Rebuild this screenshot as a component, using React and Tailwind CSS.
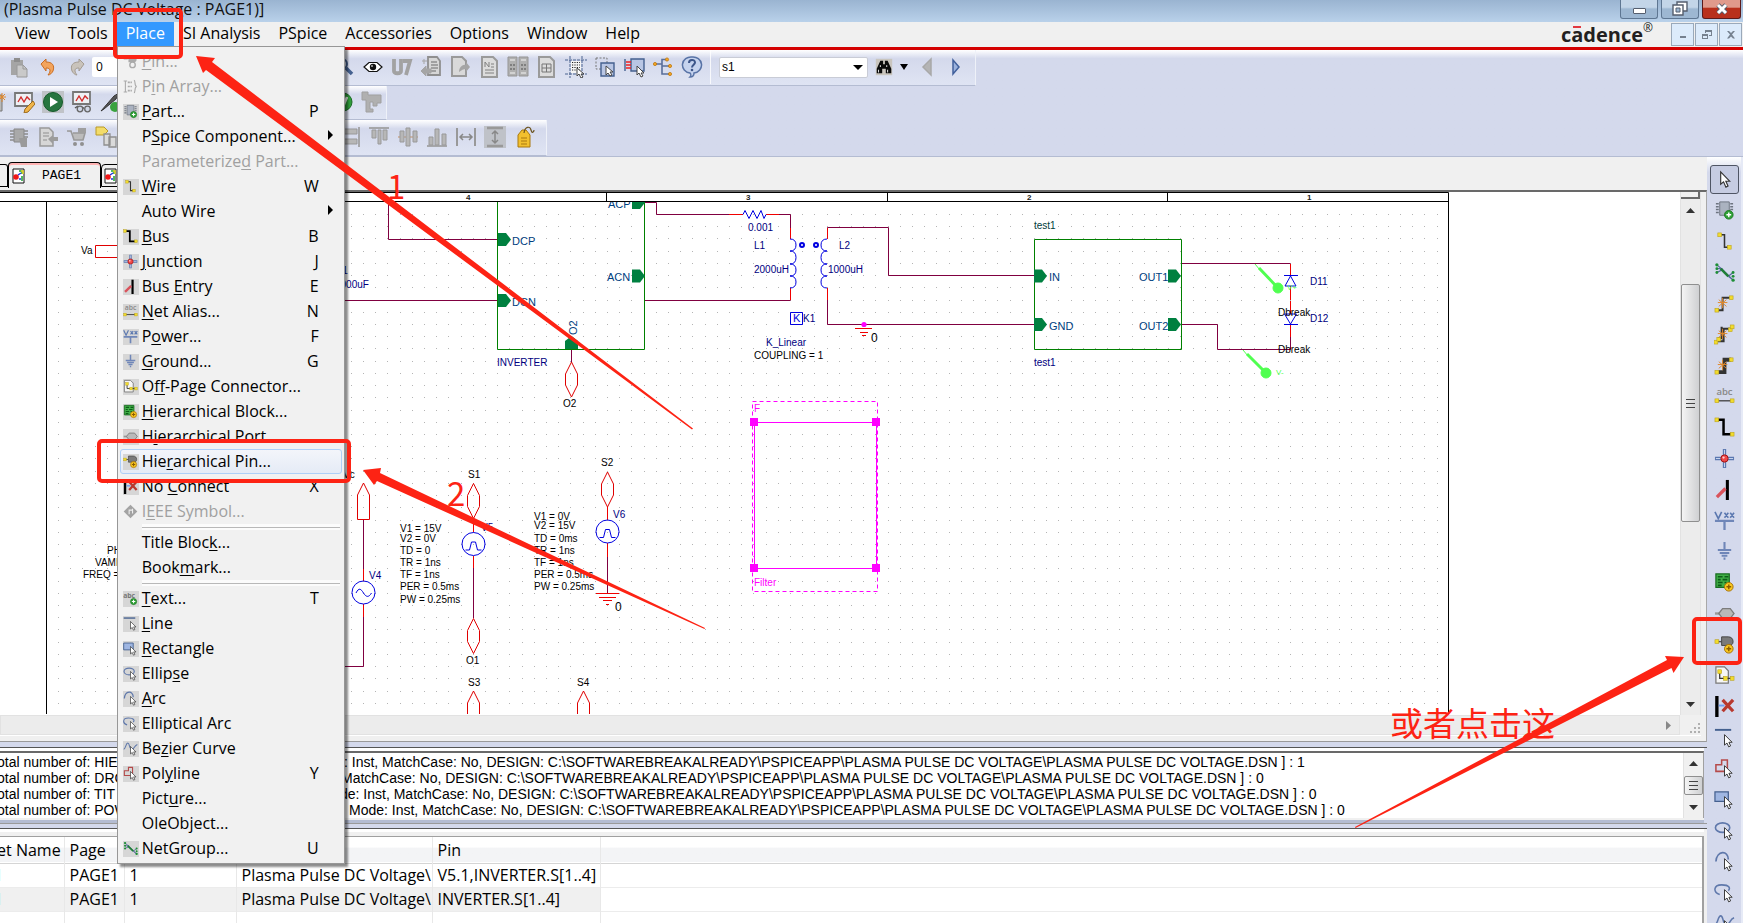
import { useState } from 'react';
import clsx from 'clsx';

const ui = "font-['Open_Sans','Noto_Sans',sans-serif]";
const arial = "font-['Liberation_Sans',Arial,sans-serif]";

const cursor = <path d="M11 8v11l2.6-2.2 1.8 4 2-1-1.8-3.8h3.4z" fill="#fff" stroke="#333" />;
const plusBadge = (fill, line) => (
    <>
        <circle cx="15.5" cy="15.5" r="4.5" fill={fill} stroke={line} />
        <path d="M13 15.5h5M15.5 13v5" stroke={fill === '#f8c820' ? '#8a5a00' : '#fff'} strokeWidth="1.5" />
    </>
);
const node = (x, y, s = 4) => <rect x={x} y={y} width={s} height={s} fill="#f2dc2c" stroke="#b8a020" strokeWidth=".6" />;

const icons = {
    paste: <><path d="M3 4h12v15H3z" fill="#a5a5a5" /><path d="M6 2h6v4H6z" fill="#8e8e8e" /><path d="M9 9h6l4 4v8H9z" fill="#c9c9c9" stroke="#999" /><path d="M15 9v4h4" fill="none" stroke="#999" /></>,
    undo: <path d="M4 8l5-5v3c6 0 9 3 7 9-1 2-3 4-5 4 3-4 3-7-2-7v3z" fill="#f3a45c" stroke="#c86d24" />,
    redo: <path d="M18 8l-5-5v3c-6 0-9 3-7 9 1 2 3 4 5 4-3-4-3-7 2-7v3z" fill="#c9c3bb" stroke="#a49c92" />,
    lens: <><circle cx="9" cy="8" r="5" fill="#dfe9f7" stroke="#44608f" strokeWidth="2" /><path d="M13 12l6 6" stroke="#44608f" strokeWidth="3.5" /></>,
    eye: <><path d="M2 11l5-4.500h8l5 4.500-5 4.500H7z" fill="#fff" stroke="#111" strokeWidth="1.2" /><circle cx="11" cy="11" r="3.2" fill="#111" /><path d="M9 10h2" stroke="#fff" /></>,
    annotate: <path d="M3 3v12c0 3 7 3 7 0V3M12 5h7l-4 14" fill="none" stroke="#a2a2a2" strokeWidth="3.8" />,
    backAnn: <><path d="M8 1h9l3 4v14H8z" fill="#d6d6d6" stroke="#8f8f8f" strokeWidth="1.8" /><path d="M11 6h6M11 9h7M11 12h7M11 15h5" stroke="#8f8f8f" strokeWidth="1.5" /><path d="M1 15l5-5v3h5v4H6v3zM2 5h5M4 3v5" fill="#a5a5a5" stroke="#a5a5a5" /></>,
    drc: <><path d="M3 1h10l4 4v15H3z" fill="#d9d9d9" stroke="#9a9a9a" strokeWidth="2" /><path d="M10 16c0-5 4-8 7-7V6l4 5-4 5v-3c-3 0-4 1-7 3z" fill="#a5a5a5" /></>,
    netlist: <><path d="M4 1h11l4 4v16H4z" fill="#dcdcdc" stroke="#9a9a9a" strokeWidth="2" /><path d="M7 11V6l4 5V6M7 14h9M7 17h9M13 8h3M13 11h3" fill="none" stroke="#808080" /></>,
    crossRef: <><path d="M1 1h9v19H1zM12 1h9v19h-9z" fill="#b0b0b0" stroke="#959595" /><path d="M3 9h6M3 13h6M14 9h6M14 13h6" stroke="#6f6f6f" strokeWidth="1.500" strokeDasharray="2 1" /><path d="M3 4h5M14 4h5M3 17h5M14 17h5" stroke="#ddd" strokeWidth="1.500" /></>,
    bom: <><path d="M3 1h11l4 4v16H3z" fill="#dcdcdc" stroke="#9a9a9a" strokeWidth="2" /><path d="M6 8h9v8H6zM6 12h9M10.500 8v8" fill="none" stroke="#777" /></>,
    area: <><path d="M5 0v22M17 0v22M0 4h22M0 18h22" stroke="#4a628f" strokeDasharray="3 1" /><path d="M6 5h10v12H6z" fill="#f5f5f5" /><path d="M7 6.5h8M7 9h8M7 11.5h8M7 14h8" stroke="#222" strokeDasharray="1.2 1.2" /><path d="M12 12v8l2-2 2 4 2-1-2-3h3z" fill="#fff" stroke="#444" /></>,
    selArea: <><path d="M2 2h11v11H2z" fill="none" stroke="#777" strokeDasharray="2 1.5" /><path d="M7 7h13v13H7z" fill="#b9c6e4" stroke="#44608f" strokeWidth="1.4" /><path d="M12 10v9l2-2 2 3 2-1-2-3h3z" fill="#fff" stroke="#444" /></>,
    dragConn: <><path d="M8 3h13v12H8z" fill="#b9c6e4" stroke="#44608f" strokeWidth="1.4" /><path d="M2 3v12" stroke="#44608f" strokeWidth="1.4" /><path d="M3 6h5M3 9h5M3 12h5" stroke="#f02020" strokeWidth="1.4" /><path d="M14 10v9l2-2 2 4 2-1-2-3h3z" fill="#fff" stroke="#444" /></>,
    tree: <><path d="M3 8h7M14 3.500h-4V18h7M10 10h7" fill="none" stroke="#5a6f9a" strokeWidth="1.6" /><g fill="#f5a623" stroke="#b86f00" strokeWidth=".7"><circle cx="3" cy="8" r="1.6" /><circle cx="15" cy="3.500" r="1.6" /><circle cx="18" cy="10" r="1.6" /><circle cx="18" cy="18" r="1.6" /></g></>,
    help: <><path d="M11 1a8.500 8 0 1 1 2 16c0 2-1 4-4 4 1-1 1-3 0-4A8.500 8 0 0 1 11 1z" fill="#c6d3ee" stroke="#5873a6" strokeWidth="1.5" /><path d="M8 7c0-4 6-4 6-.5 0 2-3 2.500-3 5" fill="none" stroke="#3d568a" strokeWidth="2" /><circle cx="11" cy="14" r="1.300" fill="#3d568a" /></>,
    find: <><path d="M2 2h18v18H2z" fill="#c9c5be" /><path d="M7 4h3v4h2V4h3l4 9v5h-6v-5H9v5H3v-5z" fill="#0a0a0a" /><path d="M5 14v3M7 9v2M15 14v3M14 9v2" stroke="#fff" /></>,
    prev: <path d="M15 3v16L7 11z" fill="#b4b4b4" stroke="#a8a8a8" strokeWidth="1.5" />,
    next: <path d="M8 4v14l6-7z" fill="#9cb2dd" stroke="#41609c" strokeWidth="1.5" />,
    star: <><path d="M10 4v16h8V4z" fill="#b9b9b9" stroke="#777" /><path d="M18 2v9M14 6h8M15 3l6 6M21 3l-6 6" stroke="#e0882c" /></>,
    simEdit: <><path d="M2 2h17v13H2z" fill="#eef0f4" stroke="#777" strokeWidth="1.8" /><path d="M5 11l3-5 3 5 3-5 3 3" fill="none" stroke="#d02a2a" strokeWidth="1.4" /><path d="M12 18l8-8 2 3-7 8-4 1z" fill="#f0b54a" stroke="#9b6a1c" /></>,
    run: <><path d="M0 0h22v22H0z" fill="#c0c3c8" /><circle cx="11" cy="11" r="9.500" fill="#27753f" stroke="#165a2b" /><path d="M8 6v10l8-5z" fill="#fff" /></>,
    simView: <><path d="M2 1h17v12H2z" fill="#eef0f4" stroke="#777" strokeWidth="1.8" /><path d="M5 10l3-5 3 5 3-5 3 3" fill="none" stroke="#d02a2a" strokeWidth="1.4" /><path d="M4 17l3-2M12 17h1" stroke="#555" strokeWidth="1.500" /><circle cx="9" cy="18" r="2.800" fill="#cfd6e6" stroke="#666" strokeWidth="1.300" /><circle cx="16.500" cy="18" r="2.800" fill="#cfd6e6" stroke="#666" strokeWidth="1.300" /></>,
    probe: <><path d="M1 20L14 5l5-3-3 6L4 18z" fill="#555" stroke="#333" /><circle cx="15" cy="16" r="5" fill="#3aa23f" /></>,
    vGreen: <><circle cx="11" cy="11" r="9" fill="#2f9c3a" stroke="#1c6b25" /><path d="M7 6l4 10 4-10" fill="none" stroke="#fff" strokeWidth="2.500" /></>,
    marker: <path d="M1 1h6v3h13v8h-4v3h-4v-4H9v7h3v3H5V9H1z" fill="#b0b0b0" stroke="#a0a0a0" />,
    chip: <><path d="M6 3h10v13H6z" fill="#a9a9a9" stroke="#888" /><path d="M2 5h4M2 8h4M2 11h4M2 14h4M16 5h4M16 8h4M16 11h4" stroke="#8c8c8c" strokeWidth="1.600" /><path d="M11 12h8v9h-6z" fill="#9a9a9a" /></>,
    pageIn: <><path d="M3 2h9l4 4v14H3z" fill="#d6d6d6" stroke="#999" strokeWidth="1.500" /><path d="M6 7h6M6 10h6M6 14h4" stroke="#8f8f8f" /><path d="M11 13l5-4v2h5v4h-5v3z" fill="#9c9c9c" /></>,
    cart: <><path d="M1 5h4l3 9h9l2-7H7" fill="#bcbcbc" stroke="#999" strokeWidth="1.600" /><path d="M12 2h8v5h-8z" fill="#9f9f9f" /><circle cx="9" cy="18" r="2" fill="#909090" /><circle cx="16" cy="18" r="2" fill="#909090" /></>,
    tagPage: <><path d="M1 1h8l4 4-4 4H1z" fill="#f3dc6a" stroke="#b99a26" /><path d="M9 8h6v11H9zM14 11h7v10h-7z" fill="#dadada" stroke="#8f8f8f" strokeWidth="1.300" /></>,
    alignL: <><path d="M20 1v20" stroke="#999" strokeWidth="1.600" /><path d="M5 3h13v5H5zM1 13h17v5H1z" fill="#b7b7b7" stroke="#999" /></>,
    alignT: <><path d="M1 2h20" stroke="#999" strokeWidth="1.600" /><path d="M4 4h4v8H4zM10 4h3v14h-3zM15 4h4v10h-4z" fill="#b7b7b7" stroke="#999" /></>,
    alignM: <><path d="M1 11h20" stroke="#c58f60" /><path d="M3 5h4v11H3zM9 2h4v18H9zM16 5h4v11h-4z" fill="#b7b7b7" stroke="#999" /></>,
    alignB: <><path d="M1 20h20" stroke="#999" strokeWidth="1.600" /><path d="M3 11h4v8H3zM9 3h4v16H9zM16 8h4v11h-4z" fill="#b7b7b7" stroke="#999" /></>,
    distH: <><path d="M2 2v18M20 2v18" stroke="#999" strokeWidth="2" /><path d="M5 11h12M8 8l-3 3 3 3M14 8l3 3-3 3" fill="none" stroke="#888" strokeWidth="1.500" /></>,
    distV: <><path d="M0 0h22v22H0z" fill="#bfc2c8" /><path d="M3 2h16M3 20h16" stroke="#999" strokeWidth="2.500" /><path d="M11 5v12M8 8l3-3 3 3M8 14l3 3 3-3" fill="none" stroke="#888" strokeWidth="1.500" /></>,
    tag: <><path d="M5 9l4-5h4l4 5v12H5z" fill="#f2c02e" stroke="#a9790f" /><path d="M8 12h6M8 15h6M8 18h6" stroke="#a9790f" /><path d="M11 7c1-7 6-7 7-3s3 2 3 0" fill="none" stroke="#6b5320" strokeWidth="1.200" /></>,

    select: <path d="M7 3v13l3-2.500 2.500 5.500 2.200-1.100-2.300-5.100h4z" fill="#fff" stroke="#333" strokeWidth="1.200" />,
    part: <><path d="M6 2h10v14H6z" fill="#aab2c0" stroke="#6d7480" /><path d="M2 4h3M2 7h3M2 10h3M2 13h3M17 4h3M17 7h3M17 10h3" stroke="#6d7480" strokeWidth="1.500" />{plusBadge('#2fa136', '#1b7a22')}</>,
    wire: <><path d="M6 4h5v13h5" fill="none" stroke="#333" strokeWidth="1.600" />{node(4, 2)}{node(14, 15)}</>,
    netGroup: <><path d="M3 3l6 5 5 5 5 5M3 7h6M3 11l6-3M20 11l-5 4M20 19l-5-4" fill="none" stroke="#56699b" strokeWidth="1.300" /><path d="M7 7l8 8" stroke="#1d7e36" strokeWidth="2.500" /><g fill="#1d8e36"><circle cx="3" cy="3" r="1.700" /><circle cx="3" cy="7" r="1.500" /><circle cx="3" cy="11" r="1.500" /><circle cx="20" cy="11" r="1.500" /><circle cx="20" cy="15" r="1.500" /><circle cx="20" cy="19" r="1.700" /></g></>,
    auto1: <><path d="M4 18h5V5h8" fill="none" stroke="#333" strokeWidth="2" /><path d="M5 7l8 7M13 7l-8 7M9 5v11M4 10h10" stroke="#e0882c" />{node(1, 16)}{node(16, 3)}</>,
    auto2: <><path d="M4 18h6V5h8M4 15h4V3" fill="none" stroke="#333" strokeWidth="2.200" /><path d="M5 7l8 7M13 7l-8 7M9 5v11M4 10h10" stroke="#e0882c" />{node(0, 17)}{node(3, 14)}{node(15, 4)}{node(17, 1)}</>,
    auto3: <><path d="M5 18h6V5h7" fill="none" stroke="#333" strokeWidth="4" /><path d="M5 7l8 7M13 7l-8 7M9 5v11M4 10h10" stroke="#e0882c" />{node(1, 16)}{node(16, 3)}</>,
    alias: <><text x="11" y="9" textAnchor="middle" fontSize="10" fontFamily="Open Sans" fontWeight="600" fill="#888">abc</text><path d="M3 15.500h16" stroke="#444" strokeWidth="1.400" />{node(1, 13.5)}{node(17, 13.5)}</>,
    bus: <><path d="M4 3h6v15h8" fill="none" stroke="#000" strokeWidth="2.600" />{node(1, 1)}{node(17, 16)}</>,
    junction: <><path d="M11 1v20M1 11h20" stroke="#5b78b0" strokeWidth="3.500" /><path d="M11 2v18M2 11h18" stroke="#c9d6f0" /><circle cx="11" cy="11" r="3.800" fill="#f04848" stroke="#a01212" /><circle cx="10" cy="10" r="1.200" fill="#ffd0d0" /></>,
    busEntry: <><path d="M14 1v21" stroke="#000" strokeWidth="3.200" /><path d="M3 19l9-9" stroke="#d9535c" strokeWidth="3.500" /></>,
    power: <><path d="M1 2l3.500 7L8 2M11 3l4 5M15 3l-4 5M17 3l4 5M21 3l-4 5" fill="none" stroke="#5b78b0" strokeWidth="1.700" /><path d="M1 11.500h20M11 12v9" stroke="#6f86b8" strokeWidth="2.400" /></>,
    ground: <path d="M11 1v8M4 9.500h14M6 12.500h10M8 15.500h6M10 18.500h2" stroke="#6f86b8" strokeWidth="2.200" />,
    block: <><path d="M2 2h14v14H2z" fill="#3fae46" stroke="#186d20" strokeWidth="1.300" /><path d="M4 5h5M11 5h4M4 8h3M9 8h5M4 11h5M11 11h2M4 14h4" stroke="#0d5c18" strokeWidth="1.700" />{plusBadge('#f8c820', '#a86f00')}</>,
    port: <><path d="M1 11h5" stroke="#999" strokeWidth="2.500" /><path d="M5 11l4-5h8l4 5-4 5H9z" fill="#b9b9b9" stroke="#7c7c7c" strokeWidth="1.300" /></>,
    pin: <><path d="M3 8h5" stroke="#555" strokeWidth="1.500" /><path d="M8 3h7c3 0 5 2 5 5s-2 4-5 4H8z" fill="#7a7a7a" stroke="#444" />{node(1, 6)}{plusBadge('#f8c820', '#a86f00')}</>,
    offPage: <><path d="M2 2h9l4 4v13H2z" fill="#f6f6f6" stroke="#777" strokeWidth="1.300" /><path d="M6 7v7h13" fill="none" stroke="#333" strokeWidth="1.300" />{node(4, 5)}{node(10, 12)}{node(17, 12)}</>,
    noConnect: <><path d="M3 0v22" stroke="#000" strokeWidth="3.500" /><path d="M5 10h6" stroke="#6f9cf0" strokeWidth="2" /><path d="M9 4l11 12M20 4L9 16" stroke="#b8382e" strokeWidth="3.400" /></>,
    line: <><path d="M1 3h17" stroke="#44608f" strokeWidth="2" />{cursor}</>,
    poly: <><path d="M2 7h6V2h6v12H2z" fill="none" stroke="#b54a4a" strokeWidth="1.600" />{cursor}</>,
    rect: <><path d="M1 3h14v10H1z" fill="#9fb6e2" stroke="#44608f" strokeWidth="1.300" />{cursor}</>,
    ellipse: <><ellipse cx="9" cy="8" rx="7.500" ry="5" fill="none" stroke="#5f78ab" strokeWidth="1.700" />{cursor}</>,
    arc: <><path d="M2 11c1-12 13-12 13-2" fill="none" stroke="#5f78ab" strokeWidth="1.800" />{cursor}</>,
    ellArc: <><path d="M6 13C-1 11-1 3 8 3s9 4 7 6" fill="none" stroke="#5f78ab" strokeWidth="1.600" />{cursor}</>,
    bezier: <><path d="M1 12c3 0 3-9 6-9s2 9 6 9 3-5 8-7" fill="none" stroke="#5f78ab" strokeWidth="1.600" />{cursor}</>,
    pinOff: <><path d="M1 5h6v3H1zM8 3h7c3 0 5 2 5 5s-2 4-5 4H8z" fill="#aaa" /><circle cx="14" cy="16" r="4" fill="none" stroke="#aaa" strokeWidth="2" /></>,
    pinArray: <><path d="M1 3h5M3.500 3v16M1 19h5M16 2c3 0 0 8 4 9-4 1-1 9-4 9" fill="none" stroke="#aaa" strokeWidth="1.600" /><path d="M7 5h6M7 11h6M7 17h6" stroke="#aaa" strokeWidth="2.500" strokeDasharray="3 1" /></>,
    ieee: <><path d="M11 1l10 10-10 10L1 11z" fill="#a3a3a3" /><path d="M9 15V9h5M14 7v7" fill="none" stroke="#eee" strokeWidth="1.600" /></>,
    text: <><text x="9" y="10" textAnchor="middle" fontSize="10" fontFamily="Open Sans" fontWeight="700" fill="#777">abc</text>{plusBadge('#2fa136', '#1b7a22')}</>,
};

function Icon({ name, className = 'size-[22px]' }) {
    return (
        <svg viewBox="0 0 22 22" className={clsx('shrink-0', className)} aria-hidden="true">
            {icons[name]}
        </svg>
    );
}

// "&" marks the access key of an entry, as in the resource file
const placeMenu = [
    { label: '&Pin...', icon: 'pinOff', disabled: true },
    { label: 'P&in Array...', icon: 'pinArray', disabled: true },
    { label: '&Part...', icon: 'part', hotkey: 'P' },
    { label: 'P&Spice Component...', sub: true },
    { label: 'Parameterize&d Part...', disabled: true },
    { label: '&Wire', icon: 'wire', hotkey: 'W' },
    { label: 'Auto Wire', sub: true },
    { label: '&Bus', icon: 'bus', hotkey: 'B' },
    { label: '&Junction', icon: 'junction', hotkey: 'J' },
    { label: 'Bus &Entry', icon: 'busEntry', hotkey: 'E' },
    { label: '&Net Alias...', icon: 'alias', hotkey: 'N' },
    { label: 'P&ower...', icon: 'power', hotkey: 'F' },
    { label: '&Ground...', icon: 'ground', hotkey: 'G' },
    { label: 'O&ff-Page Connector...', icon: 'offPage' },
    { label: '&Hierarchical Block...', icon: 'block' },
    { label: 'H&ierarchical Port...', icon: 'port' },
    { label: 'Hie&rarchical Pin...', icon: 'pin', active: true },
    { label: 'No &Connect', icon: 'noConnect', hotkey: 'X' },
    { label: 'I&EEE Symbol...', icon: 'ieee', disabled: true },
    null,
    { label: 'Title Bloc&k...' },
    { label: 'Book&mark...' },
    null,
    { label: '&Text...', icon: 'text', hotkey: 'T' },
    { label: '&Line', icon: 'line' },
    { label: '&Rectangle', icon: 'rect' },
    { label: 'Ellip&se', icon: 'ellipse' },
    { label: '&Arc', icon: 'arc' },
    { label: 'Elliptical Arc', icon: 'ellArc' },
    { label: 'Be&zier Curve', icon: 'bezier' },
    { label: 'Pol&yline', icon: 'poly', hotkey: 'Y' },
    { label: 'Pict&ure...' },
    { label: 'OleObject...' },
    { label: 'NetGroup...', icon: 'netGroup', hotkey: 'U' },
];

const menus = ['View', 'Tools', 'Place', 'SI Analysis', 'PSpice', 'Accessories', 'Options', 'Window', 'Help'];

const palette = [
    'select', 'part', 'wire', 'netGroup', 'auto1', 'auto2', 'auto3', 'alias', 'bus', 'junction', 'busEntry', 'power',
    'ground', 'block', 'port', 'pin', 'offPage', 'noConnect', 'line', 'poly', 'rect', 'ellipse', 'arc', 'ellArc', 'bezier',
];

const designPath = 'DESIGN: C:\\SOFTWAREBREAKALREADY\\PSPICEAPP\\PLASMA PULSE DC VOLTAGE\\PLASMA PULSE DC VOLTAGE.DSN ]';
const logLines = [
    { head: 'Total number of: HIE', tail: `: Inst, MatchCase: No, ${designPath} : 1`, width: 'w-[344px]' },
    { head: 'Total number of: DRC', tail: `MatchCase: No, ${designPath} : 0`, width: 'w-[341px]' },
    { head: 'Total number of: TIT', tail: `de: Inst, MatchCase: No, ${designPath} : 0`, width: 'w-[340px]' },
    { head: 'Total number of: POW', tail: `Mode: Inst, MatchCase: No, ${designPath} : 0`, width: 'w-[349px]' },
];

const netRows = [
    { net: '1', page: 'PAGE1', no: '1', path: 'Plasma Pulse DC Voltage\\', pin: 'V5.1,INVERTER.S[1..4]' },
    { net: '1', page: 'PAGE1', no: '1', path: 'Plasma Pulse DC Voltage\\', pin: 'INVERTER.S[1..4]' },
];

function MenuLabel({ text }) {
    const at = text.indexOf('&');
    if (at < 0) return text;
    return (
        <>
            {text.slice(0, at)}
            <span className="underline decoration-1 underline-offset-2">{text[at + 1]}</span>
            {text.slice(at + 2)}
        </>
    );
}

function PlaceMenu() {
    return (
        <div role="menu" className="absolute left-0 top-full z-20 w-[228px] border border-[#979797] bg-[#f1f1f1] px-[2px] py-[2px] shadow-[3px_3px_2px_rgba(0,0,0,0.45)]">
            {placeMenu.map((item, i) => item ? (
                <button
                    key={i}
                    role="menuitem"
                    disabled={item.disabled}
                    className={clsx(
                        'flex h-[25px] w-full items-center rounded-[3px] border pl-[2px] pr-2 text-left text-[16px] leading-5',
                        item.active ? 'border-[#aecff7] bg-linear-to-b from-[#f3f5fa] to-[#e5ebf6]' : 'border-transparent',
                        item.disabled ? 'text-[#a0a0a0]' : 'text-black'
                    )}
                >
                    <span className={clsx('mr-[3px] flex size-4 shrink-0 items-center justify-center', item.icon && !item.disabled && 'bg-[#d6d6d6]')}>
                        {item.icon && <Icon name={item.icon} className="size-[15px]" />}
                    </span>
                    <span className="flex-1 whitespace-nowrap pb-[2px]"><MenuLabel text={item.label} /></span>
                    {item.hotkey && <span className="mr-[14px] pb-[2px]">{item.hotkey}</span>}
                    {item.sub && <svg viewBox="0 0 5 10" className="mb-1 h-[10px] w-[5px]"><path d="M0 0l5 5-5 5z" /></svg>}
                </button>
            ) : (
                <div key={i} className="ml-[22px] mr-[2px] flex h-[6px] items-center bg-white/70">
                    <div className="h-px w-full bg-[#b8b8b8]"></div>
                </div>
            ))}
        </div>
    );
}

function TitleBar() {
    return (
        <div className="flex h-[22px] items-start justify-between bg-linear-to-b from-[#9ab4d1] to-[#b9d1ea] pl-1">
            <h1 className="text-[16px] leading-[18px] text-[#111]">(Plasma Pulse DC Voltage : PAGE1)]</h1>
            <div className="flex gap-[3px] pr-[2px]">
                <button aria-label="Minimize" className="flex h-[19px] w-[38px] items-center justify-center rounded-b-[3px] border border-t-0 border-[#5e7692] bg-linear-to-b from-[#c3d5e8] from-40% to-[#9db7d2] to-50% pt-1">
                    <span className="h-[6px] w-[13px] rounded-[1px] border border-[#555e6e] bg-white"></span>
                </button>
                <button aria-label="Restore" className="flex h-[19px] w-[38px] items-center justify-center rounded-b-[3px] border border-t-0 border-[#5e7692] bg-linear-to-b from-[#c3d5e8] from-40% to-[#9db7d2] to-50%">
                    <svg viewBox="0 0 16 16" className="size-4"><path d="M5 1h10v9H5z" fill="#fff" stroke="#555e6e" strokeWidth="1.400" /><path d="M1 4h10v10H1z" fill="#fff" stroke="#555e6e" strokeWidth="1.400" /><path d="M4 7h4v4H4z" fill="#9db7d2" stroke="#555e6e" /></svg>
                </button>
                <button aria-label="Close" className="flex h-[19px] w-[39px] items-center justify-center rounded-b-[3px] border border-t-0 border-[#5b1a1a] bg-linear-to-b from-[#e09a8c] from-40% to-[#b8301c] to-45%">
                    <svg viewBox="0 0 14 12" className="h-3 w-[14px]"><path d="M3 2l8 8M11 2l-8 8" stroke="#555e6e" strokeWidth="4.600" /><path d="M3 2l8 8M11 2l-8 8" stroke="#fff" strokeWidth="3" /></svg>
                </button>
            </div>
        </div>
    );
}

function MenuBar({ open, setOpen }) {
    return (
        <div className="flex h-[25px] items-start justify-between bg-[#f0f0f0]">
            <nav className="flex pl-[6px]">
                {menus.map((name) => (
                    <div key={name} className="relative">
                        <button
                            onClick={() => setOpen(open === name ? '' : name)}
                            className={clsx('block h-6 whitespace-nowrap px-[9px] pb-px text-[16px] leading-[23px]', name === open ? 'bg-[#3399ff] text-white' : 'text-black')}
                        >
                            {name}
                        </button>
                        {name === 'Place' && open === name && <PlaceMenu />}
                    </div>
                ))}
            </nav>
            <div className="flex items-start pr-px">
                <div className="relative mr-[18px] flex text-[#231f20]">
                    <span className="text-[20px] font-bold leading-[25px]">cadence</span>
                    <span className="absolute left-[12px] top-[4px] h-[2px] w-[8px] bg-[#e2383f]"></span>
                    <sup className="top-0 text-[12px] leading-[12px]">®</sup>
                </div>
                <div className="flex gap-px pt-px">
                    {[['Minimize page', 'M4 8h6v2H4z'], ['Restore page', 'M2 6h6v5H2zM3 8v2h4V8zM5 2h7v6H9V7h2V4H6v1H5z'], ['Close page', 'M3 3h2l2 2 2-2h2L8 6.500l3 4H9l-2-2-2 2H3l3-4z']].map(([label, d]) => (
                        <button key={label} aria-label={label} className="flex h-[23px] w-[23px] items-center justify-center border border-[#9aa9ba] bg-[#dcebfb]">
                            <svg viewBox="0 0 14 13" className="h-[13px] w-[14px]"><path d={d} fill="#75818f" fillRule="evenodd" /></svg>
                        </button>
                    ))}
                </div>
            </div>
        </div>
    );
}

function ToolRow({ names }) {
    return names.map((name) => (
        <button key={name} aria-label={name} className="flex h-full w-[29px] shrink-0 items-center justify-center">
            <Icon name={name} />
        </button>
    ));
}

const strip = 'flex w-max items-center border-b border-r border-b-[#b4bcd2] border-r-[#eef1f8] bg-linear-to-b from-white via-[#d4d9ec] via-25% to-[#dfe4f3] pb-px';

function Toolbars() {
    return (
        <div className="border-b border-[#b4bcd2] bg-linear-to-b from-white via-[#d4d9ec] via-8% to-[#d4d9ec]">
            <div className={clsx(strip, 'h-9 pl-1')}>
                <ToolRow names={['paste', 'undo', 'redo']} />
                <select aria-label="Zoom" className="ml-px h-5 w-[237px] appearance-none rounded-[2px] bg-white pl-1 text-[12px]">
                    <option>0</option>
                </select>
                <ToolRow names={['lens', 'eye', 'annotate', 'backAnn', 'drc', 'netlist', 'crossRef', 'bom', 'area', 'selArea', 'dragConn', 'tree', 'help']} />
                <div className="ml-1 flex h-full items-center border-l border-white/80 pl-2">
                    <div className="relative">
                        <select aria-label="Find" className={clsx('block h-[21px] w-[149px] appearance-none rounded-[2px] border border-[#c9ccd6] bg-white pl-[2px] text-[12px]', arial)}>
                            <option>s1</option>
                        </select>
                        <svg viewBox="0 0 10 5" className="pointer-events-none absolute right-[5px] top-2 h-[5px] w-[10px]"><path d="M0 0h10L5 5z" /></svg>
                    </div>
                    <button aria-label="Search" className="flex w-8 justify-center"><Icon name="find" className="size-5" /></button>
                    <button aria-label="Search options"><svg viewBox="0 0 8 6" className="h-[6px] w-2"><path d="M0 0h8L4 6z" /></svg></button>
                    <button aria-label="Previous" className="ml-1 flex w-[29px] justify-center"><Icon name="prev" /></button>
                    <button aria-label="Next" className="mr-1 flex w-[30px] justify-center"><Icon name="next" /></button>
                </div>
            </div>
            <div className={clsx(strip, 'h-[34px] w-[394px] overflow-hidden')}>
                <div className="-ml-[20px] flex h-full items-center">
                    <ToolRow names={['star', 'simEdit', 'run', 'simView', 'probe']} />
                    <div className="w-[203px]"></div>
                    <ToolRow names={['vGreen', 'marker']} />
                </div>
            </div>
            <div className={clsx(strip, 'h-9 pl-1 pr-2')}>
                <ToolRow names={['chip', 'pageIn', 'cart', 'tagPage']} />
                <div className="w-[215px]"></div>
                <ToolRow names={['alignL', 'alignT', 'alignM', 'alignB', 'distH', 'distV', 'tag']} />
            </div>
        </div>
    );
}

function PageIcon() {
    return (
        <svg viewBox="0 0 13 16" className="h-4 w-[13px]">
            <path d="M1 1h11v14H1z" fill="#fff" stroke="#111" />
            <circle cx="4" cy="9" r="2.800" fill="#f01818" />
            <path d="M7 3h3v3M10 8v5" fill="none" stroke="#18a030" strokeWidth="1.500" />
            <path d="M9 3h2v3" fill="none" stroke="#e8d020" strokeWidth="1.500" />
            <path d="M6 7l3-2M7 11h2" stroke="#2030e0" strokeWidth="1.500" />
        </svg>
    );
}

function Tabs() {
    return (
        <div role="tablist" className="flex h-[33px] items-start bg-[#f0f0f0] pt-[5px]">
            <div className="mt-[2px] h-[23px] w-2 rounded-tr-[3px] border border-l-0 border-black"></div>
            <button role="tab" aria-selected="true" className="flex h-[26px] w-[93px] items-center rounded-t-[4px] border border-b-0 border-black bg-[#f0f0f0] pl-[3px] shadow-[inset_0_2px_0_#ffb3b3]">
                <PageIcon />
                <span className="ml-[17px] font-['Liberation_Mono',monospace] text-[13px]">PAGE1</span>
            </button>
            <button role="tab" aria-label="Next page" className="mt-[2px] flex h-[23px] w-20 items-center rounded-t-[4px] border border-black pl-[2px]"><PageIcon /></button>
        </div>
    );
}

function gridDots() {
    let d = '';
    for (let r = 0; r < 41; r++) {
        const y = Math.round(214 + r * 12.22) + 0.5;
        for (let c = 0; c < 114; c++) d += `M${Math.round(58 + c * 12.2)} ${y}h1`;
    }
    return d;
}
const dots = gridDots();

const Port = ({ x, y }) => <path d={`M${x} ${y - 6.5}h8l5 6.500-5 6.500h-8z`} fill="#008040" />;
const Hexagon = ({ x, y }) => <path d={`M${x} ${y}l6 12v11l-6 12-6-12v-11z`} stroke="#e00000" />;
const Pulse = ({ x, y }) => (
    <g stroke="#0000e0">
        <circle cx={x} cy={y} r="11.5" />
        <path d={`M${x - 8} ${y + 6}h4l2-8h4l2 8h4`} />
    </g>
);

const labels = [
    // [x, y, text, colour]
    [81, 254, 'Va', '#000'],
    [107, 554, 'PHASE', '#000'],
    [95, 566, 'VAMPL', '#000'],
    [83, 578, 'FREQ =', '#000'],
    [343, 478, 'Vc', '#000'],
    [335, 274, 'C1', '#000080'],
    [335, 288, '1000uF', '#000080'],
    [497, 366, 'INVERTER', '#000080'],
    [563, 407, 'O2', '#000'],
    [748, 231, '0.001', '#000080'],
    [754, 249, 'L1', '#000080'],
    [754, 273, '2000uH', '#000080'],
    [839, 249, 'L2', '#000080'],
    [828, 273, '1000uH', '#000080'],
    [803, 322, 'K1', '#000080'],
    [766, 346, 'K_Linear', '#000080'],
    [754, 359, 'COUPLING = 1', '#000'],
    [1034, 229, 'test1', '#003c3c'],
    [1034, 366, 'test1', '#000080'],
    [1310, 285, 'D11', '#000080'],
    [1310, 322, 'D12', '#000080'],
    [1278, 316, 'Dbreak', '#000'],
    [1278, 353, 'Dbreak', '#000'],
    [754, 412, 'F', '#ff00ff'],
    [754, 586, 'Filter', '#ff00ff'],
    [468, 478, 'S1', '#000'],
    [601, 466, 'S2', '#000'],
    [468, 686, 'S3', '#000'],
    [577, 686, 'S4', '#000'],
    [466, 664, 'O1', '#000'],
    [481, 531, 'V5', '#000080'],
    [613, 518, 'V6', '#000080'],
    [369, 579, 'V4', '#000080'],
    [400, 532, 'V1 = 15V', '#000'],
    [400, 542, 'V2 = 0V', '#000'],
    [400, 554, 'TD = 0', '#000'],
    [400, 566, 'TR = 1ns', '#000'],
    [400, 578, 'TF = 1ns', '#000'],
    [400, 590, 'PER = 0.5ms', '#000'],
    [400, 603, 'PW = 0.25ms', '#000'],
    [534, 520, 'V1 = 0V', '#000'],
    [534, 529, 'V2 = 15V', '#000'],
    [534, 542, 'TD = 0ms', '#000'],
    [534, 554, 'TR = 1ns', '#000'],
    [534, 566, 'TF = 1ns', '#000'],
    [534, 578, 'PER = 0.5ms', '#000'],
    [534, 590, 'PW = 0.25ms', '#000'],
];

const portLabels = [
    [512, 245, 'DCP'], [512, 306, 'DCN'], [608, 208, 'ACP'], [607, 281, 'ACN'],
    [1049, 281, 'IN'], [1049, 330, 'GND'], [1139, 281, 'OUT1'], [1139, 330, 'OUT2'],
];

function Schematic() {
    return (
        <svg viewBox="0 192 1680 522" className={clsx('h-[522px] w-[1680px]', arial)} fill="none">
            <defs>
                <clipPath id="sheet"><rect x="0" y="202" width="1680" height="512" /></clipPath>
            </defs>
            <path d={dots} stroke="#b4b4b4" />
            <g clipPath="url(#sheet)">
                <path d="M388.500 202v37.500H498M344 300.500H498M645 202.500h11.500v12H729M779 214.500h11.500V228M790.500 300.500H644.500V276M571.500 349v13M827.500 228v-.500H888.500v48H1034M827.500 300v24.500H1034M1181.500 276v-12.500H1290.500M1290.500 337v12.500H1217.500v-25H1181.500M363.500 519v50M363.500 617v49.500H344M473.500 568v50M607.500 557v36" stroke="#800040" />
                <path d="M729 214.500h14M766 214.500h13M790.500 228v11M790.500 288v12M827.500 228v11M827.500 288v12M855 328.500h17M860 332.500h8M862 335.500h4M1290.500 264v12M1290.500 286v14M1290.500 301v13M1290.500 325v12M363.500 569v12M363.500 604v13M473.500 518v14M473.500 556v12M607.500 507v13M607.500 543v14M596 593.500h23M599 597.500h17M603 600.500h9M606 604.500h3" stroke="#f00000" />
                <path d="M118 245.500H95.500v12H118M357.500 519.500V495l6-12 6 12v24.500z" stroke="#e00000" />
                <path d="M497.500 190h147v159.500h-147zM1034.500 239.500h147v110h-147z" stroke="#008000" />
                <path d="M743 214.500l2-4 4 8 4-8 4 8 4-8 3 8 2-4M790 239q6 0 6 6t-6 6q6 0 6 6.500t-6 6.500q6 0 6 6t-6 6q6 0 6 6t-6 6M827 239q-6 0-6 6t6 6q-6 0-6 6.500t6 6.500q-6 0-6 6t6 6q-6 0-6 6t6 6M790.500 312.500h12v12h-12zM1284 275.500h14M1290.500 276l5.500 10h-11zM1284 324.500h14M1290.500 324l6-10h-12z" stroke="#0000e0" />
                <circle cx="802" cy="245" r="2" stroke="#0000e0" strokeWidth="2" />
                <circle cx="816" cy="245" r="2" stroke="#0000e0" strokeWidth="2" />
                <circle cx="864" cy="324.500" r="2.600" fill="#ff00ff" />
                <Port x={498} y={239.5} />
                <Port x={498} y={300.5} />
                <Port x={632} y={202.5} />
                <Port x={632} y={276} />
                <Port x={1034} y={276} />
                <Port x={1034} y={324.5} />
                <Port x={1168} y={276} />
                <Port x={1168} y={324.5} />
                <path d="M565 349v-8l6.500-5 6.500 5v8z" fill="#008040" />
                <Hexagon x={571.5} y={362} />
                <Hexagon x={473.5} y={483.5} />
                <Hexagon x={607.5} y={472} />
                <Hexagon x={473.5} y={618.5} />
                <Hexagon x={473.5} y={691} />
                <Hexagon x={583.5} y={691} />
                <Pulse x={473.5} y={544} />
                <Pulse x={607.5} y={531.5} />
                <g stroke="#0000e0">
                    <circle cx="363.500" cy="592.500" r="11.500" />
                    <path d="M356 593c3-6 5-4 7.500 0s5 5 8 0" />
                </g>
                <path d="M752.500 401.500h125v190h-125z" stroke="#ff00ff" strokeDasharray="4 3" />
                <path d="M754.500 422.500h122v146h-122z" stroke="#ff00ff" />
                <path d="M750 418h8v8h-8zM872 418h8v8h-8zM750 564h8v8h-8zM872 564h8v8h-8z" fill="#ff00ff" />
                <g stroke="#50ff50" fill="#50ff50">
                    <path d="M1255 264l5 6M1243 350l5 6" />
                    <path d="M1259 268l19 20M1247 354l19 19" strokeWidth="3" />
                    <circle cx="1278" cy="288" r="5" />
                    <circle cx="1266" cy="373" r="5" />
                </g>
                <g fontSize="8" fill="#50ff50">
                    <text x="1287" y="290">V+</text>
                    <text x="1276" y="375">V-</text>
                </g>
                <g fontSize="10">
                    {labels.map(([x, y, text, fill], i) => <text key={i} x={x} y={y} fill={fill}>{text}</text>)}
                </g>
                <g fontSize="11" fill="#004080">
                    {portLabels.map(([x, y, text]) => <text key={text} x={x} y={y}>{text}</text>)}
                    <text transform="translate(577 335) rotate(-90)">O2</text>
                    <text x="793" y="322" fill="#0000e0">K</text>
                </g>
                <g fontSize="12" fill="#000">
                    <text x="871" y="342">0</text>
                    <text x="615" y="611">0</text>
                </g>
            </g>
            <path d="M0 192.500H1448.500V714M0 201.500H1448M46.500 202V714M606.500 193v8M887.500 193v8M1167.500 193v8" stroke="#000" />
            <g fontSize="8" fontWeight="700" fill="#222">
                <text x="466" y="200">4</text>
                <text x="746" y="200">3</text>
                <text x="1027" y="200">2</text>
                <text x="1307" y="200">1</text>
            </g>
        </svg>
    );
}

function Arrow({ up }) {
    return <svg viewBox="0 0 9 5" className="h-[5px] w-[9px]"><path d={up ? 'M0 5l4.500-5L9 5z' : 'M0 0h9L4.500 5z'} fill="#333" /></svg>;
}

function Canvas() {
    return (
        <div className="flex min-h-0 flex-1 flex-col border-b border-r border-t-2 border-b-[#9a9a9a] border-r-[#a8a8a8] border-t-[#696969] bg-[#f0f0f0] pb-[5px] pr-[5px]">
            <div className="flex min-h-0 flex-1">
                <div className="min-w-0 flex-1 overflow-hidden bg-white"><Schematic /></div>
                <div className="flex w-[21px] flex-col items-center border-x border-[#e2e2e2] bg-[#ececec]">
                    <div className="h-[7px] w-full border-b-2 border-r-2 border-[#696969] bg-[#f0f0f0]"></div>
                    <div className="flex h-[22px] items-center"><Arrow up /></div>
                    <div className="mt-[63px] flex h-[238px] w-[19px] flex-col items-center justify-center gap-[3px] rounded-[2px] border border-[#8f8f8f] bg-linear-to-r from-[#f4f4f4] to-[#cfd0d2]">
                        <div className="h-px w-[9px] bg-[#444]"></div>
                        <div className="h-px w-[9px] bg-[#444]"></div>
                        <div className="h-px w-[9px] bg-[#444]"></div>
                    </div>
                    <div className="flex flex-1 items-end pb-2"><Arrow /></div>
                </div>
            </div>
            <div className="flex h-[21px] border-b border-white bg-[#ececec]">
                <div className="flex flex-1 items-center justify-end border border-[#e2e2e2] pr-2">
                    <svg viewBox="0 0 5 9" className="h-[9px] w-[5px]"><path d="M0 0l5 4.500-5 4.500z" fill="#888" /></svg>
                </div>
                <div className="flex w-[21px] items-end justify-end bg-[#f0f0f0] pb-px">
                    <svg viewBox="0 0 12 12" className="size-3" fill="#b0b0b0"><path d="M9 1h2v2H9zM9 5h2v2H9zM5 5h2v2H5zM9 9h2v2H9zM5 9h2v2H5zM1 9h2v2H1z" /></svg>
                </div>
            </div>
        </div>
    );
}

function SessionLog() {
    return (
        <div className="pr-[3px]">
            <div className="h-[3px] bg-white"></div>
            <div className="flex border-r border-t-2 border-r-[#a0a0a0] border-t-[#696969] bg-white">
                <div className={clsx('min-w-0 flex-1 overflow-hidden pt-px text-[14px] leading-4 text-black', arial)}>
                    {logLines.map((line) => (
                        <p key={line.head} className="flex whitespace-nowrap">
                            <span className={clsx('shrink-0 overflow-hidden', line.width)}>
                                <span className="-ml-[10px]">{line.head}</span>
                            </span>
                            <span>{line.tail}</span>
                        </p>
                    ))}
                </div>
                <div className="flex w-5 flex-col items-center justify-between border-l border-[#e2e2e2] bg-[#f0f0f0] py-2">
                    <Arrow up />
                    <div className="flex h-[19px] w-[19px] flex-col items-center justify-center gap-[3px] rounded-[2px] border border-[#8f8f8f] bg-linear-to-r from-[#f4f4f4] to-[#cfd0d2]">
                        <div className="h-px w-[9px] bg-[#444]"></div>
                        <div className="h-px w-[9px] bg-[#444]"></div>
                        <div className="h-px w-[9px] bg-[#444]"></div>
                    </div>
                    <Arrow />
                </div>
            </div>
            <div className="h-[2px] bg-[#f0f0f0]"></div>
            <div className="h-[3px] bg-[#b4bcd2]"></div>
        </div>
    );
}

function NetTable() {
    const cell = 'overflow-hidden whitespace-nowrap border-r border-[#e8e8e8] px-[5px] text-left font-normal';
    return (
        <div className="h-[94px] shrink-0 overflow-hidden bg-[#f0f0f0] pr-[3px]">
            <div className="h-[3px] bg-white"></div>
            <div className="mt-1 h-full border-r-2 border-t border-[#a0a0a0] bg-white">
                <table className="w-full table-fixed border-collapse text-[16px] leading-[22px] text-black">
                    <colgroup>
                        <col className="w-[64px]" />
                        <col className="w-[60px]" />
                        <col className="w-[112px]" />
                        <col className="w-[196px]" />
                        <col className="w-[168px]" />
                        <col />
                    </colgroup>
                    <thead>
                        <tr className="h-[26px] border-b border-[#d5d5d5] bg-linear-to-b from-white from-40% to-[#f3f4f6] to-45%">
                            <th className={cell}><span className="-ml-[20px]">Net Name</span></th>
                            <th className={cell}>Page</th>
                            <th className={cell}></th>
                            <th className={cell}></th>
                            <th className={cell}>Pin</th>
                            <th></th>
                        </tr>
                    </thead>
                    <tbody>
                        {netRows.map((row, i) => (
                            <tr key={i} className="h-6 border-b border-[#ececec]">
                                <td className={clsx(cell, i === 1 && 'bg-[#f0f0f0]')}><span className="-ml-[11px]">{row.net}</span></td>
                                <td className={clsx(cell, i === 1 && 'bg-[#f0f0f0]')}>{row.page}</td>
                                <td className={clsx(cell, i === 1 && 'bg-[#f0f0f0]')}>{row.no}</td>
                                <td className={clsx(cell, i === 1 && 'bg-[#f0f0f0]')}>{row.path}</td>
                                <td className={clsx(cell, i === 1 && 'bg-[#f0f0f0]')}>{row.pin}</td>
                                <td></td>
                            </tr>
                        ))}
                        <tr className="h-6">
                            <td className={cell}></td>
                            <td className={cell}></td>
                            <td className={cell}></td>
                            <td className={cell}></td>
                            <td className={cell}></td>
                            <td></td>
                        </tr>
                    </tbody>
                </table>
            </div>
        </div>
    );
}

function Palette() {
    return (
        <aside className="flex w-9 shrink-0 flex-col items-center gap-[2px] overflow-hidden border-r-2 border-[#e6eaf6] bg-linear-to-b from-white via-[#d4d9ec] via-2% to-[#d4d9ec] pt-2">
            {palette.map((name, i) => (
                <button
                    key={name}
                    aria-label={name}
                    className={clsx('flex size-[29px] shrink-0 items-center justify-center rounded-[3px]', i === 0 && 'border border-[#4f5564] bg-[#c6cce2]')}
                >
                    <Icon name={name} className="size-[21px]" />
                </button>
            ))}
        </aside>
    );
}

function Annotations() {
    return (
        <svg viewBox="0 0 1743 923" className="pointer-events-none absolute left-0 top-0 z-30 h-[923px] w-[1743px]">
            <g fill="none" stroke="#fd2314" strokeWidth="4">
                <rect x="115" y="10" width="66" height="47" rx="3" />
                <rect x="99" y="441" width="250" height="40" rx="3" />
                <rect x="1694" y="619" width="46" height="44" rx="3" />
            </g>
            <g fill="#fd2314">
                <path d="M196 56l19 2-3 4L693 428.500l-1 1L206 70l-3 3z" />
                <path d="M363 470l18-2-1 5L705 628l-.500 1L377 481l-3 4z" />
                <path d="M1684 657l-10.500 16-2-5L1355.500 828l-.500-1L1667 660l-2-4z" />
            </g>
            <g fill="#fd2314" className="font-['Noto_Sans_CJK_SC',sans-serif]">
                <text x="387" y="199" fontSize="33">1</text>
                <text x="447" y="506" fontSize="33">2</text>
                <text x="1390" y="736" fontSize="33">或者点击这</text>
            </g>
        </svg>
    );
}

function App() {
    const [open, setOpen] = useState('Place');

    return (
        <div className={clsx('relative flex h-screen flex-col overflow-hidden bg-[#d4d9ec]', ui)}>
            <TitleBar />
            <MenuBar open={open} setOpen={setOpen} />
            <div className="h-[3px] shrink-0 bg-[#d40000]"></div>
            <Toolbars />
            <div className="flex min-h-0 flex-1">
                <main className="flex min-w-0 flex-1 flex-col">
                    <Tabs />
                    <Canvas />
                    <div className="h-[6px] shrink-0 border-b border-[#555]"></div>
                    <SessionLog />
                    <div className="h-[6px] shrink-0 border-b border-t border-b-[#555] border-t-[#9a9a9a]"></div>
                    <NetTable />
                </main>
                <Palette />
            </div>
            <Annotations />
        </div>
    );
}

export default App;
